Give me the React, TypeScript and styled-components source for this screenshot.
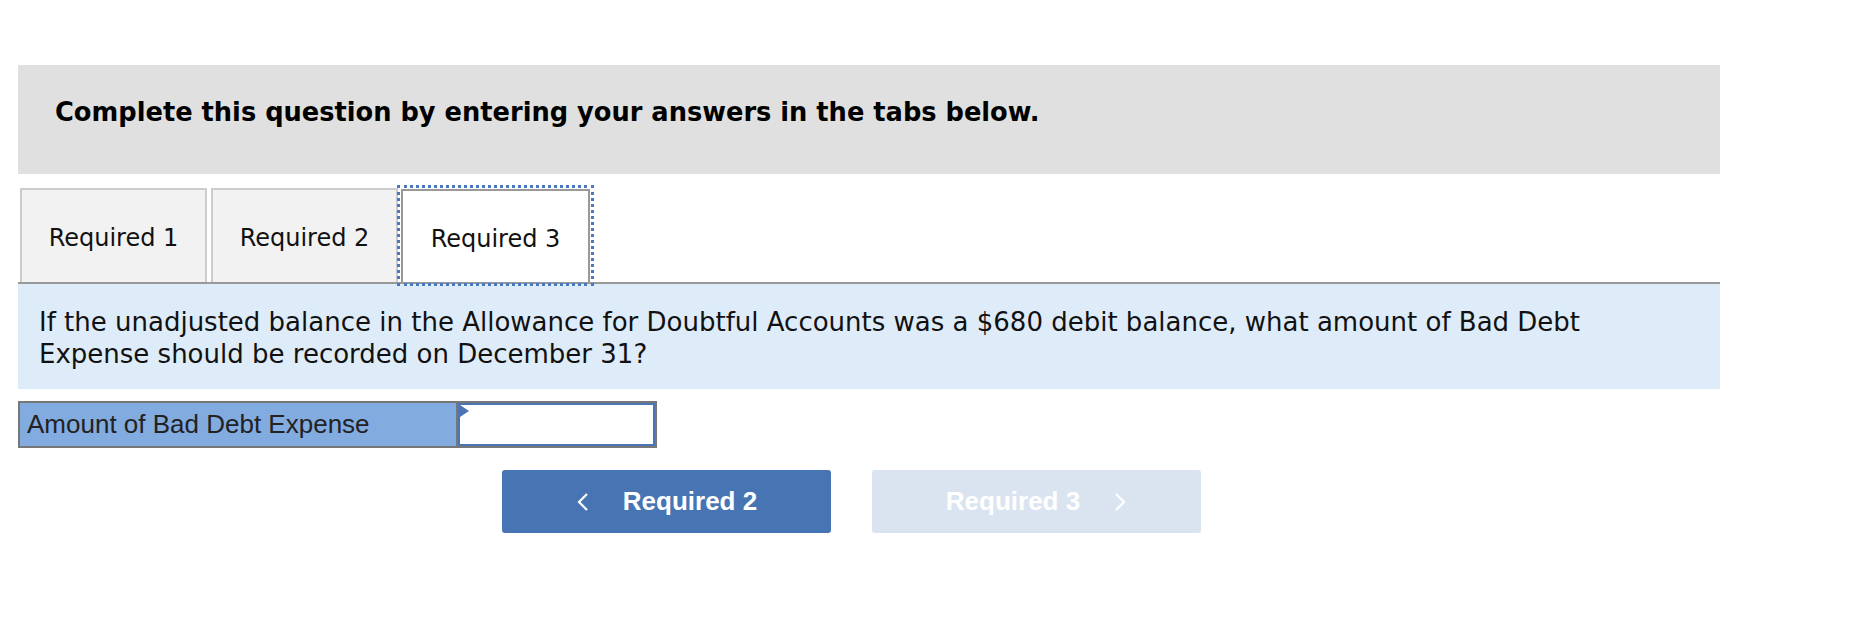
import React from "react";
import styled, { createGlobalStyle } from "styled-components";

const Global = createGlobalStyle`
  html, body { margin: 0; padding: 0; background: #ffffff; }
  body { font-family: "DejaVu Sans", Verdana, sans-serif; }
`;

const Page = styled.div`
  padding: 65px 148px 0 18px;
  width: 1702px;
`;

const Banner = styled.div`
  box-sizing: border-box;
  background: #e0e0e0;
  height: 109px;
  display: flex;
  align-items: center;
  padding-left: 37px;
  padding-bottom: 16px;
  font-family: "DejaVu Sans", Verdana, sans-serif;
  font-weight: bold;
  font-size: 25.7px;
  color: #000;
`;

const TabBar = styled.div`
  margin-top: 14px;
  display: flex;
  align-items: flex-end;
  gap: 4px;
  padding-left: 2px;
  border-bottom: 2px solid #999999;
  height: 94px;
`;

const Tab = styled.div<{ $active?: boolean }>`
  box-sizing: border-box;
  width: ${(p) => (p.$active ? "189px" : "187px")};
  height: ${(p) => (p.$active ? "93px" : "94px")};
  margin-left: ${(p) => (p.$active ? "-1px" : "0")};
  display: flex;
  align-items: center;
  justify-content: center;
  padding-top: 4px;
  background: ${(p) => (p.$active ? "#ffffff" : "#f2f2f2")};
  border: 2px solid ${(p) => (p.$active ? "#999999" : "#cccccc")};
  border-bottom: none;
  outline: ${(p) => (p.$active ? "3px dotted #4a78bf" : "none")};
  outline-offset: 1px;
  font-size: 24px;
  color: #111;
`;

const Question = styled.div`
  background: #deebf8;
  padding: 22px 21px 19px 21px;
  font-size: 26px;
  line-height: 32px;
  color: #111;
`;

const AnswerRow = styled.div`
  margin-top: 12px;
  display: flex;
  height: 47px;
`;

const Label = styled.div`
  box-sizing: border-box;
  width: 438px;
  height: 47px;
  background: #82abe0;
  border: 2px solid #777777;
  border-right: none;
  display: flex;
  align-items: center;
  padding-left: 7px;
  font-family: "Liberation Sans", Arial, sans-serif;
  font-size: 26px;
  color: #222;
`;

const InputWrap = styled.div`
  box-sizing: border-box;
  width: 201px;
  height: 47px;
  border: 2px solid #777777;
  position: relative;
  display: flex;
`;

const Input = styled.input`
  box-sizing: border-box;
  width: 100%;
  min-width: 0;
  height: 100%;
  border: 2px solid #4a74b4;
  margin: 0;
  padding: 0 6px;
  outline: none;
  background: #fff;
  font-size: 22px;
`;

const Marker = styled.div`
  position: absolute;
  left: 2px;
  top: 2px;
  width: 0;
  height: 0;
  border-top: 6px solid transparent;
  border-bottom: 6px solid transparent;
  border-left: 9px solid #4a74b4;
`;

const Nav = styled.div`
  margin-top: 22px;
  padding-left: 484px;
  display: flex;
  gap: 41px;
`;

const NavButton = styled.button<{ $disabled?: boolean }>`
  box-sizing: border-box;
  width: 329px;
  height: 63px;
  border: none;
  border-radius: 3px;
  background: ${(p) => (p.$disabled ? "#dae4f0" : "#4775b3")};
  color: #ffffff;
  display: flex;
  align-items: center;
  justify-content: center;
  gap: 34px;
  font-family: "Liberation Sans", Arial, sans-serif;
  font-weight: bold;
  font-size: 26px;
  padding: 0;
  cursor: pointer;
`;

const Chevron = ({ dir }: { dir: "left" | "right" }) => (
  <svg width="13" height="20" viewBox="0 0 13 20">
    {dir === "left" ? (
      <polyline points="11,2 3,10 11,18" fill="none" stroke="#ffffff" strokeWidth="2.2" />
    ) : (
      <polyline points="2,2 10,10 2,18" fill="none" stroke="#ffffff" strokeWidth="2.2" />
    )}
  </svg>
);

export default function App() {
  return (
    <>
      <Global />
      <Page>
        <Banner>Complete this question by entering your answers in the tabs below.</Banner>
        <TabBar>
          <Tab>Required 1</Tab>
          <Tab>Required 2</Tab>
          <Tab $active>Required 3</Tab>
        </TabBar>
        <Question>
          If the unadjusted balance in the Allowance for Doubtful Accounts was a $680 debit balance, what amount of Bad Debt
          <br />
          Expense should be recorded on December 31?
        </Question>
        <AnswerRow>
          <Label>Amount of Bad Debt Expense</Label>
          <InputWrap>
            <Input type="text" aria-label="Amount of Bad Debt Expense" />
            <Marker />
          </InputWrap>
        </AnswerRow>
        <Nav>
          <NavButton>
            <Chevron dir="left" />
            <span>Required 2</span>
          </NavButton>
          <NavButton $disabled>
            <span>Required 3</span>
            <Chevron dir="right" />
          </NavButton>
        </Nav>
      </Page>
    </>
  );
}
